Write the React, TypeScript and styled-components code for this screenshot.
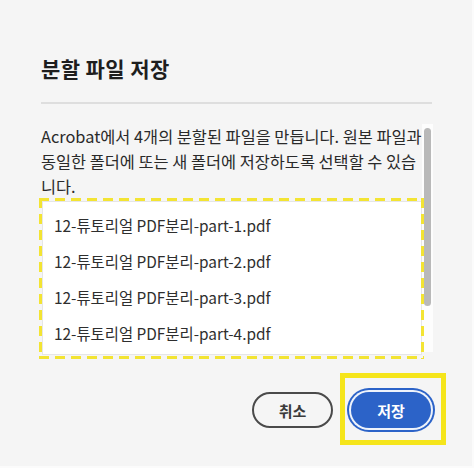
import React from "react";
import styled, { createGlobalStyle } from "styled-components";

const Global = createGlobalStyle`
  html, body { margin: 0; padding: 0; background: #fbfbfb; }
  body { font-family: "Noto Sans CJK KR", "Noto Sans", sans-serif; }
`;

const Dialog = styled.div`
  box-sizing: border-box;
  width: 472px;
  height: 466px;
  background: #f5f5f5;
  padding: 54px 40px 0 41px;
  display: flex;
  flex-direction: column;
`;

const Title = styled.h1`
  margin: 0;
  font-size: 21px;
  line-height: 28px;
  font-weight: 700;
  color: #1e1e1e;
  letter-spacing: 0.4px;
`;

const Divider = styled.hr`
  margin: 20px 0 0 0;
  border: none;
  height: 2px;
  background: #dedede;
  width: 391px;
`;

const ScrollArea = styled.div`
  margin-top: 20px;
  display: flex;
  width: 392px;
  height: 228px;
`;

const Content = styled.div`
  flex: 1;
  display: flex;
  flex-direction: column;
`;

const Description = styled.p`
  margin: 0;
  font-size: 16.35px;
  line-height: 25px;
  color: #2a2a2a;
  white-space: nowrap;
`;

const Y = "#f3e433";

const FileList = styled.ul`
  position: relative;
  list-style: none;
  margin: 2px 0 0 1px;
  padding: 5px 0 4px 0;
  background: #ffffff;
  border: 1px solid #e6e6e6;
  box-sizing: border-box;
  height: 154px;
  &::after {
    content: "";
    position: absolute;
    inset: -4px -3px -5px -4px;
    pointer-events: none;
    background:
      repeating-linear-gradient(90deg, ${Y} 0 10px, transparent 10px 16px) left top / 100% 3px no-repeat,
      repeating-linear-gradient(90deg, ${Y} 0 10px, transparent 10px 16px) left bottom / 100% 3px no-repeat,
      repeating-linear-gradient(180deg, ${Y} 0 10px, transparent 10px 16px) left top / 3px 100% no-repeat,
      repeating-linear-gradient(180deg, ${Y} 0 10px, transparent 10px 16px) right top / 3px 100% no-repeat;
  }
`;

const FileItem = styled.li`
  height: 36px;
  line-height: 36px;
  padding-left: 11px;
  font-size: 15.4px;
  color: #2e2e2e;
`;

const Track = styled.div`
  width: 14px;
  background: #fdfdfd;
  display: flex;
  justify-content: center;
  padding-top: 4px;
  box-sizing: border-box;
`;

const Thumb = styled.div`
  width: 7px;
  height: 178px;
  border-radius: 4px;
  background: #b9b9b9;
`;

const ButtonRow = styled.div`
  margin-top: 40px;
  display: flex;
  justify-content: flex-end;
  align-items: center;
  gap: 18px;
  width: 390px;
`;

const BaseButton = styled.button`
  box-sizing: border-box;
  height: 36px;
  border-radius: 18px;
  font-family: "Noto Sans CJK KR", "Noto Sans", sans-serif;
  font-size: 15px;
  font-weight: 700;
  cursor: pointer;
`;

const CancelButton = styled(BaseButton)`
  width: 81px;
  background: transparent;
  border: 2px solid #4a4a4a;
  color: #3a3a3a;
  font-weight: 600;
`;

const Highlight = styled.div`
  position: relative;
  display: flex;
  &::after {
    content: "";
    position: absolute;
    top: -19px;
    bottom: -17px;
    left: -11px;
    right: -15px;
    border: 5px solid #f5e51b;
    pointer-events: none;
  }
`;

const SaveButton = styled(BaseButton)`
  width: 80px;
  background: #2c63c8;
  border: none;
  color: #ffffff;
  box-shadow: 0 0 0 2px #eef3fb, 0 0 0 4px #2c63c8;
`;

const files = [1, 2, 3, 4].map((n) => `12-튜토리얼 PDF분리-part-${n}.pdf`);

export default function App() {
  return (
    <>
      <Global />
      <Dialog>
        <Title>분할 파일 저장</Title>
        <Divider />
        <ScrollArea>
          <Content>
            <Description>
              Acrobat에서 4개의 분할된 파일을 만듭니다. 원본 파일과
              <br />
              동일한 폴더에 또는 새 폴더에 저장하도록 선택할 수 있습
              <br />
              니다.
            </Description>
            <FileList>
              {files.map((f) => (
                <FileItem key={f}>{f}</FileItem>
              ))}
            </FileList>
          </Content>
          <Track>
            <Thumb />
          </Track>
        </ScrollArea>
        <ButtonRow>
          <CancelButton>취소</CancelButton>
          <Highlight>
            <SaveButton>저장</SaveButton>
          </Highlight>
        </ButtonRow>
      </Dialog>
    </>
  );
}
